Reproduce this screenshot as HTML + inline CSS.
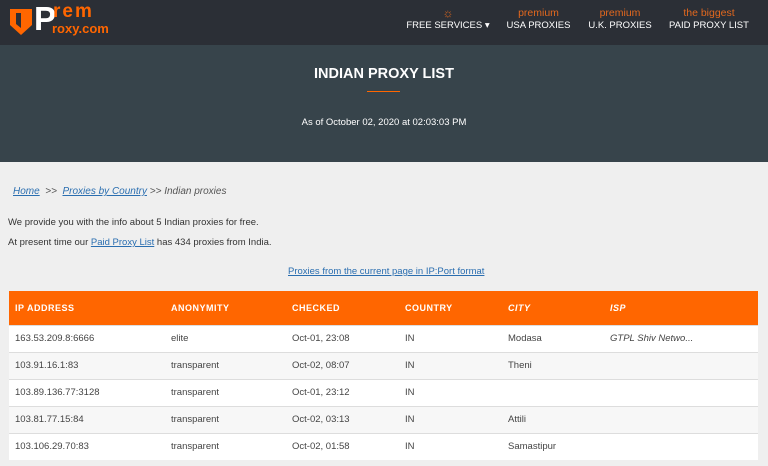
<!DOCTYPE html>
<html><head><style>
*{margin:0;padding:0;box-sizing:border-box}
body{width:768px;height:466px;overflow:hidden;background:#efefef;font-family:"Liberation Sans",Arial,sans-serif;font-size:9px;color:#333}
.top{height:45px;background:#2b2f36;position:relative}
.hero{height:117px;background:#37444b;position:relative;text-align:center;color:#fff}
.nav{position:absolute;top:0;font-size:9.5px;color:#fff;text-align:center}
.nav .p{color:#e2681e;font-size:10.5px;display:block;height:14px;line-height:14px;margin-top:6px}
.nav .m{display:block;line-height:12px}
a{color:#2a6eb0;text-decoration:underline}
table{position:absolute;left:9px;top:291px;width:749px;border-collapse:collapse;background:#fff}
th{background:#f60;color:#fff;text-align:left;height:34px;font-size:9px;letter-spacing:.5px;padding-left:6px}
td{height:27px;border-top:1px solid #ddd;padding-left:6px;font-size:9.5px;color:#444}
tr:nth-child(odd) td{background:#f7f7f7}
</style></head><body>
<div class="top">
 <svg style="position:absolute;left:9px;top:8px" width="24" height="28" viewBox="0 0 24 28"><path d="M1 1H23V17L12 27L1 17Z" fill="#f60"/><path d="M7 5H12V20L7 16Z" fill="#2b2f36"/></svg>
 <div style="position:absolute;left:34px;top:2px;font-size:33px;font-weight:bold;color:#fff;line-height:34px">P</div>
 <div style="position:absolute;left:53px;top:1px;font-size:19px;font-weight:bold;color:#f60;letter-spacing:2px;line-height:22px">rem</div>
 <div style="position:absolute;left:52px;top:21px;font-size:13px;font-weight:bold;color:#f60;line-height:16px">roxy.com</div>
 <div class="nav" style="left:405px;width:86px"><span class="p" style="font-size:12px">☼</span><span class="m">FREE SERVICES ▾</span></div>
 <div class="nav" style="left:504px;width:69px"><span class="p">premium</span><span class="m">USA PROXIES</span></div>
 <div class="nav" style="left:586px;width:68px"><span class="p">premium</span><span class="m">U.K. PROXIES</span></div>
 <div class="nav" style="left:667px;width:84px"><span class="p">the biggest</span><span class="m">PAID PROXY LIST</span></div>
</div>
<div class="hero">
 <div style="position:absolute;top:21px;width:100%;font-size:14.5px;font-weight:bold">INDIAN PROXY LIST</div>
 <div style="position:absolute;top:46px;left:367px;width:33px;height:1px;background:#f60"></div>
 <div style="position:absolute;top:72px;width:100%;font-size:9.5px">As of October 02, 2020 at 02:03:03 PM</div>
</div>
<div style="position:absolute;left:13px;top:186px;font-size:10px;font-style:italic;color:#555"><a href="#">Home</a> &nbsp;&gt;&gt;&nbsp; <a href="#">Proxies by Country</a> &gt;&gt; Indian proxies</div>
<div style="position:absolute;left:8px;top:217px;font-size:9.5px">We provide you with the info about 5 Indian proxies for free.</div>
<div style="position:absolute;left:8px;top:237px;font-size:9.5px">At present time our <a href="#">Paid Proxy List</a> has 434 proxies from India.</div>
<div style="position:absolute;left:288px;top:266px;font-size:9.5px"><a href="#">Proxies from the current page in IP:Port format</a></div>
<table>
<tr><th style="width:156px">IP ADDRESS</th><th style="width:121px">ANONYMITY</th><th style="width:113px">CHECKED</th><th style="width:103px">COUNTRY</th><th style="width:102px;font-style:italic">CITY</th><th style="font-style:italic">ISP</th></tr>
<tr><td>163.53.209.8:6666</td><td>elite</td><td>Oct-01, 23:08</td><td>IN</td><td>Modasa</td><td style="font-style:italic">GTPL Shiv Netwo...</td></tr>
<tr><td>103.91.16.1:83</td><td>transparent</td><td>Oct-02, 08:07</td><td>IN</td><td>Theni</td><td></td></tr>
<tr><td>103.89.136.77:3128</td><td>transparent</td><td>Oct-01, 23:12</td><td>IN</td><td></td><td></td></tr>
<tr><td>103.81.77.15:84</td><td>transparent</td><td>Oct-02, 03:13</td><td>IN</td><td>Attili</td><td></td></tr>
<tr><td>103.106.29.70:83</td><td>transparent</td><td>Oct-02, 01:58</td><td>IN</td><td>Samastipur</td><td></td></tr>
</table>
</body></html>
